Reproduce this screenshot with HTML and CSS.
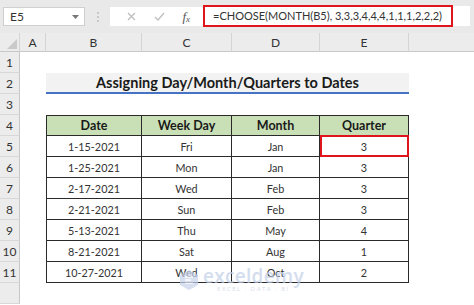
FILE: index.html
```html
<!DOCTYPE html>
<html>
<head>
<meta charset="utf-8">
<link rel="stylesheet" href="styles.css">
</head>
<body>
<div class="app">
  <div class="toolbar">
    <div class="namebox"><span>E5</span><svg class="dd" width="7" height="4" viewBox="0 0 7 4"><path d="M0 0h7L3.5 4z" fill="#777"/></svg></div>
    <div class="dots"><i></i><i></i><i></i></div>
    <div class="fbtns">
      <svg width="9" height="9" viewBox="0 0 9 9"><path d="M1 1l7 7M8 1L1 8" stroke="#bdbdbd" stroke-width="1.2"/></svg>
      <svg width="11" height="9" viewBox="0 0 11 9"><path d="M1 5l3 3 6-7" stroke="#bdbdbd" stroke-width="1.2" fill="none"/></svg>
      <span class="fx">f<sub>x</sub></span>
    </div>
    <div class="fbar"><div class="formula">=CHOOSE(MONTH(B5), 3,3,3,4,4,4,1,1,1,2,2,2)</div></div>
  </div>
  <div class="sheet">
    <div class="corner"><svg width="10" height="10" viewBox="0 0 10 10"><path d="M10 0V10H0z" fill="#c9c9c9"/></svg></div>
    <div class="ch">A</div><div class="ch">B</div><div class="ch">C</div><div class="ch">D</div><div class="ch">E</div><div class="ch last"></div>

    <div class="rh">1</div><div class="blank w7"></div>
    <div class="rh">2</div><div class="blank"></div><div class="title">Assigning Day/Month/Quarters to Dates</div><div class="blank"></div>
    <div class="rh">3</div><div class="blank w7"></div>

    <div class="rh">4</div><div class="blank"></div>
    <div class="th first">Date</div><div class="th">Week Day</div><div class="th">Month</div><div class="th">Quarter</div><div class="blank"></div>

    <div class="rh">5</div><div class="blank"></div>
    <div class="td first">1-15-2021</div><div class="td">Fri</div><div class="td">Jan</div><div class="td sel">3</div><div class="blank"></div>

    <div class="rh">6</div><div class="blank"></div>
    <div class="td first">1-25-2021</div><div class="td">Mon</div><div class="td">Jan</div><div class="td">3</div><div class="blank"></div>

    <div class="rh">7</div><div class="blank"></div>
    <div class="td first">2-17-2021</div><div class="td">Wed</div><div class="td">Feb</div><div class="td">3</div><div class="blank"></div>

    <div class="rh">8</div><div class="blank"></div>
    <div class="td first">2-21-2021</div><div class="td">Sun</div><div class="td">Feb</div><div class="td">3</div><div class="blank"></div>

    <div class="rh">9</div><div class="blank"></div>
    <div class="td first">5-13-2021</div><div class="td">Thu</div><div class="td">May</div><div class="td">4</div><div class="blank"></div>

    <div class="rh">10</div><div class="blank"></div>
    <div class="td first">8-21-2021</div><div class="td">Sat</div><div class="td">Aug</div><div class="td">1</div><div class="blank"></div>

    <div class="rh">11</div><div class="blank"></div>
    <div class="td first">10-27-2021</div><div class="td">Wed</div><div class="td">Oct</div><div class="td">2</div><div class="blank"></div>

    <div class="rh"></div><div class="blank w7"></div>

    <div class="watermark">
      <svg width="22" height="22" viewBox="0 0 22 22"><path d="M11 1l9 5v10l-9 5-9-5V6z" fill="#c7d3ea"/><path d="M7 8h8M7 11h6M7 14h8" stroke="#eef2fa" stroke-width="2"/></svg>
      <div class="wm-text"><span class="wm-name">exceldemy</span><span class="wm-sub">EXCEL · DATA · BI</span></div>
    </div>
  </div>
</div>
</body>
</html>
```
FILE: styles.css
```css
* { box-sizing: border-box; }
html, body { margin: 0; padding: 0; }
body {
  width: 474px;
  height: 305px;
  overflow: hidden;
  background: #fff;
  font-family: Lato, "Open Sans", sans-serif;
  color: #222;
}
.app { width: 474px; height: 305px; overflow: hidden; }
.toolbar {
  height: 33px;
  background: #e9e9e9;
  display: flex;
  align-items: flex-start;
  padding: 7px 0 0 3px;
}
.namebox {
  width: 82px;
  height: 19px;
  background: #fff;
  border: 1px solid #d0d0d0;
  display: flex;
  align-items: center;
  justify-content: space-between;
  padding: 0 5px 0 6px;
  font-size: 12px;
  color: #333;
}
.dots {
  width: 25px;
  height: 19px;
  display: flex;
  flex-direction: column;
  align-items: center;
  justify-content: center;
  gap: 2px;
}
.dots i { width: 2px; height: 2px; background: #c8c8c8; display: block; }
.fbtns {
  width: 93px;
  height: 19px;
  background: #fff;
  display: flex;
  align-items: center;
  justify-content: space-around;
  padding: 0 4px 0 8px;
}
.fx {
  font-family: "Liberation Serif", serif;
  font-style: italic;
  font-size: 13px;
  color: #555;
  line-height: 1;
}
.fx sub { font-size: 9px; vertical-align: -1px; }
.fbar {
  flex: 1;
  height: 20px;
  margin-top: -1px;
  background: #fff;
  margin-right: 4px;
}
.formula {
  width: 250px;
  height: 22px;
  margin-top: -1px;
  border: 2px solid #e0141b;
  font-size: 11px;
  line-height: 18px;
  padding-left: 8px;
  color: #333;
  white-space: nowrap;
}
.sheet {
  position: relative;
  display: grid;
  grid-template-columns: 20px 26px 96px 90px 88px 89px 65px;
  grid-template-rows: 19px repeat(12, 21px);
}
.corner {
  background: #ececec;
  border-right: 1px solid #d4d4d4;
  border-bottom: 1px solid #c8c8c8;
  display: flex;
  align-items: flex-end;
  justify-content: flex-end;
  padding: 0 2px 2px 0;
}
.ch {
  background: #ececec;
  border-right: 1px solid #d4d4d4;
  border-bottom: 1px solid #c8c8c8;
  font-size: 12px;
  color: #333;
  display: flex;
  align-items: center;
  justify-content: center;
}
.ch.last { border-right: none; }
.rh {
  background: #ececec;
  border-right: 1px solid #c8c8c8;
  border-bottom: 1px solid #d8d8d8;
  font-size: 12px;
  color: #333;
  display: flex;
  align-items: center;
  justify-content: center;
}
.blank { background: #fff; }
.w7 { grid-column: span 6; }
.title {
  grid-column: span 4;
  background: #f2f2f2;
  border-bottom: 2px solid #4472c4;
  font-weight: 700;
  font-size: 14.5px;
  display: flex;
  align-items: center;
  justify-content: center;
  color: #1a1a1a;
}
.th, .td {
  display: flex;
  align-items: center;
  justify-content: center;
  border-right: 1px solid #2a2a2a;
  border-bottom: 1px solid #2a2a2a;
}
.th {
  background: #c9e0b6;
  border-top: 1px solid #2a2a2a;
  font-weight: 700;
  font-size: 12.5px;
  color: #1a1a1a;
}
.first { border-left: 1px solid #2a2a2a; }
.td { font-size: 10.8px; color: #333; }
.sel { position: relative; }
.sel::after {
  content: "";
  position: absolute;
  left: 0;
  top: -1px;
  right: -1px;
  bottom: -1px;
  border: 2px solid #e0141b;
}
.watermark {
  position: absolute;
  left: 178px;
  top: 233px;
  display: flex;
  align-items: center;
  gap: 3px;
  opacity: 0.7;
}
.wm-text { display: flex; flex-direction: column; align-items: center; }
.wm-name { font-family: "Open Sans", sans-serif; font-size: 19px; font-weight: 600; color: #c2cfe8; line-height: 20px; letter-spacing: 0.3px; }
.wm-sub { font-family: "Open Sans", sans-serif; font-size: 6px; color: #c8d0dc; letter-spacing: 1.5px; line-height: 7px; }
```
